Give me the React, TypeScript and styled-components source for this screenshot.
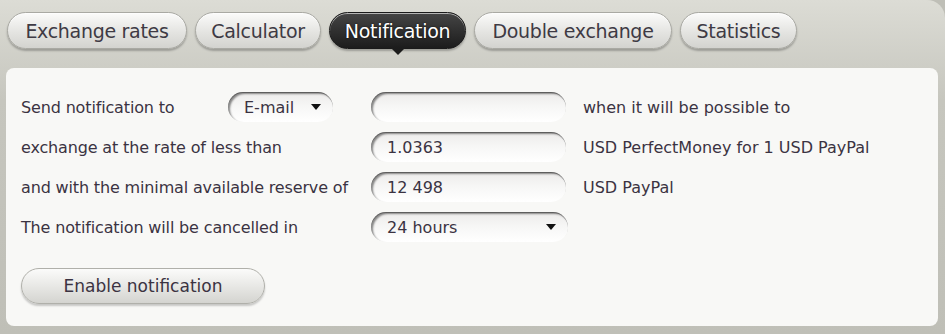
import React from 'react';
import styled, { createGlobalStyle } from 'styled-components';

const GlobalStyle = createGlobalStyle`
  body {
    margin: 0;
    background: #bfbfb7;
    font-family: 'DejaVu Sans', Verdana, sans-serif;
  }
`;

const Frame = styled.div`
  width: 945px;
  height: 334px;
  box-sizing: border-box;
  padding: 12px 7px 8px 6px;
  background: linear-gradient(#dcdcd5, #c6c6be 30%, #bfbfb7);
  border-top-right-radius: 18px;
  display: flex;
  flex-direction: column;
`;

const TabBar = styled.div`
  display: flex;
  gap: 8px;
  padding-left: 1px;
  height: 38px;
`;

const Tab = styled.div<{ $width: number; $active?: boolean }>`
  position: relative;
  width: ${({ $width }) => $width}px;
  height: 37px;
  box-sizing: border-box;
  border-radius: 19px;
  display: flex;
  align-items: center;
  justify-content: center;
  font-size: 19px;
  letter-spacing: -0.3px;
  color: ${({ $active }) => ($active ? '#ffffff' : '#3e3a44')};
  background: ${({ $active }) =>
    $active ? 'linear-gradient(#454545, #1c1c1c)' : 'linear-gradient(#fbfbfa, #e4e4e1 55%, #d3d3cf)'};
  border: 1px solid ${({ $active }) => ($active ? '#1a1a1a' : '#a9a9a3')};
  box-shadow: 0 2px 2px rgba(0, 0, 0, 0.25), inset 0 1px 0 rgba(255, 255, 255, 0.6);
  text-shadow: ${({ $active }) => ($active ? '0 0 2px rgba(0,0,0,0.8)' : 'none')};

  ${({ $active }) =>
    $active &&
    `
    &::after {
      content: '';
      position: absolute;
      left: 50%;
      bottom: -7px;
      margin-left: -7px;
      border-left: 7px solid transparent;
      border-right: 7px solid transparent;
      border-top: 7px solid #1c1c1c;
    }
  `}
`;

const Panel = styled.div`
  margin-top: 18px;
  flex: 1;
  background: #f8f8f6;
  border-radius: 8px;
  padding: 24px 15px 0 15px;
  color: #3b3342;
  font-size: 16px;
`;

const Form = styled.div`
  display: grid;
  grid-template-columns: 207px 143px 195px auto;
  grid-auto-rows: 30px;
  row-gap: 10px;
  align-items: center;
`;

const Label = styled.div<{ $span?: number }>`
  grid-column: span ${({ $span }) => $span || 1};
  white-space: nowrap;
  letter-spacing: -0.15px;
`;

const Note = styled.div`
  padding-left: 17px;
  white-space: nowrap;
`;

const Field = styled.div<{ $width?: number }>`
  width: ${({ $width }) => ($width ? `${$width}px` : '100%')};
  height: 30px;
  box-sizing: border-box;
  border-radius: 15px;
  background: linear-gradient(#ecebea, #f7f7f6 50%, #ffffff);
  box-shadow: inset 2px 2px 2px rgba(0, 0, 0, 0.45), inset 0 1px 0 rgba(0, 0, 0, 0.3);
  display: flex;
  align-items: center;
  justify-content: space-between;
  padding: 0 12px 0 16px;
  font-size: 16px;
  color: #3b3342;
`;

const Arrow = styled.span`
  width: 0;
  height: 0;
  border-left: 5px solid transparent;
  border-right: 5px solid transparent;
  border-top: 6px solid #111;
`;

const Button = styled.div`
  margin-top: 26px;
  width: 244px;
  height: 36px;
  box-sizing: border-box;
  border-radius: 18px;
  border: 1px solid #b0b0aa;
  background: linear-gradient(#fbfbfa, #e6e6e3 55%, #d4d4d0);
  box-shadow: 0 2px 2px rgba(0, 0, 0, 0.2);
  display: flex;
  align-items: center;
  justify-content: center;
  font-size: 17px;
  color: #3b3342;
`;

const tabs = [
  { label: 'Exchange rates', width: 180 },
  { label: 'Calculator', width: 126 },
  { label: 'Notification', width: 137, active: true },
  { label: 'Double exchange', width: 198 },
  { label: 'Statistics', width: 117 },
];

export default function App() {
  return (
    <>
      <GlobalStyle />
      <Frame>
        <TabBar>
          {tabs.map((t) => (
            <Tab key={t.label} $width={t.width} $active={t.active}>
              {t.label}
            </Tab>
          ))}
        </TabBar>
        <Panel>
          <Form>
            <Label>Send notification to</Label>
            <Field $width={105}>
              E-mail
              <Arrow />
            </Field>
            <Field />
            <Note>when it will be possible to</Note>

            <Label $span={2}>exchange at the rate of less than</Label>
            <Field>1.0363</Field>
            <Note>USD PerfectMoney for 1 USD PayPal</Note>

            <Label $span={2}>and with the minimal available reserve of</Label>
            <Field>12 498</Field>
            <Note>USD PayPal</Note>

            <Label $span={2}>The notification will be cancelled in</Label>
            <Field $width={197}>
              24 hours
              <Arrow />
            </Field>
          </Form>
          <Button>Enable notification</Button>
        </Panel>
      </Frame>
    </>
  );
}
